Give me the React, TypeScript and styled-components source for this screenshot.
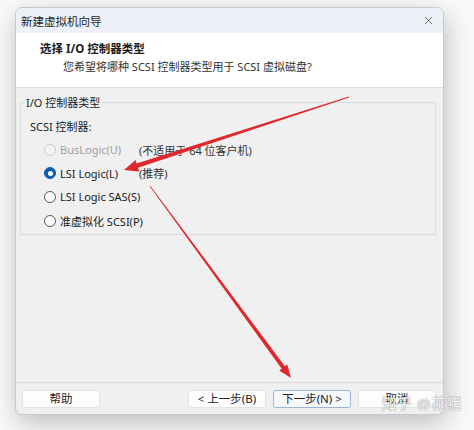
import styled, { createGlobalStyle } from "styled-components";
import { X } from "lucide-react";

const GlobalStyle = createGlobalStyle`
  html, body {
    margin: 0;
    padding: 0;
    background: #f9f9f9;
  }
  body {
    font-family: "Noto Sans", "Noto Sans CJK SC", sans-serif;
    font-size: 11px;
    color: #1b1b1b;
  }
`;

const Page = styled.div`
  position: relative;
  width: 474px;
  height: 430px;
  padding: 7px 0 0 15px;
  box-sizing: border-box;
  overflow: hidden;
`;

const Window = styled.div`
  width: 429px;
  height: 408px;
  box-sizing: border-box;
  display: flex;
  flex-direction: column;
  background: #f0f0f0;
  border: 1px solid #c6c9ce;
  border-radius: 7px;
  box-shadow: 2px 8px 26px rgba(0, 0, 0, 0.24);
  overflow: hidden;
`;

const TitleBar = styled.div`
  height: 25px;
  flex: none;
  display: flex;
  align-items: center;
  justify-content: space-between;
  padding: 0 8px 0 5px;
  background: #edf1f7;
  font-size: 11.5px;
  color: #1e1e1e;
`;

const CloseIcon = styled(X)`
  width: 13px;
  height: 13px;
  stroke-width: 1.3;
  color: #333;
`;

const Header = styled.div`
  height: 55px;
  flex: none;
  box-sizing: border-box;
  padding: 8px 0 0 24px;
  background: #fff;
  border-bottom: 1px solid #dedede;
`;

const Heading = styled.div`
  font-weight: 700;
  line-height: 16px;
  font-size: 11.5px;
`;

const Subtitle = styled.div`
  margin: 2px 0 0 23px;
  line-height: 16px;
  color: #333;
`;

const Body = styled.div`
  flex: 1;
  padding: 7px 7px 0 4px;
`;

const GroupBox = styled.fieldset`
  margin: 0;
  padding: 0 0 2px 9px;
  border: 1px solid #dcdcdc;
  min-width: 0;
`;

const GroupLabel = styled.legend`
  padding: 0 2px;
  margin-left: -6px;
  line-height: 15px;
`;

const FieldLabel = styled.div`
  line-height: 15px;
  margin: 9px 0 4px;
`;

const RadioList = styled.div`
  display: flex;
  flex-direction: column;
  padding-left: 14px;
`;

const RadioRow = styled.div`
  display: grid;
  grid-template-columns: 95px auto;
  align-items: center;
  height: 23.6px;
`;

const RadioLabel = styled.label<{ $disabled?: boolean }>`
  display: flex;
  align-items: center;
  gap: 4px;
  color: ${(p) => (p.$disabled ? "#a0a0a0" : "#1b1b1b")};
  white-space: nowrap;
`;

const RadioDot = styled.span<{ $checked?: boolean; $disabled?: boolean }>`
  position: relative;
  width: 12px;
  height: 12px;
  box-sizing: border-box;
  border-radius: 50%;
  flex: none;
  border: 1px solid
    ${(p) => (p.$checked ? "#0b5fb0" : p.$disabled ? "#cdcdcd" : "#5a5a5a")};
  background: ${(p) => (p.$checked ? "#0b5fb0" : p.$disabled ? "#f3f3f3" : "#fafafa")};

  &::after {
    content: "";
    display: ${(p) => (p.$checked ? "block" : "none")};
    position: absolute;
    left: 50%;
    top: 50%;
    width: 5px;
    height: 5px;
    margin: -2.5px 0 0 -2.5px;
    border-radius: 50%;
    background: #fff;
  }
`;

const Note = styled.span`
  color: #333;
  white-space: nowrap;
`;

const Footer = styled.div`
  flex: none;
  display: flex;
  align-items: center;
  padding: 7px 7px 6px 6px;
  border-top: 1px solid #dadada;
`;

const NavGroup = styled.div`
  margin-left: auto;
  display: flex;
  gap: 7px;
`;

const Button = styled.button<{ $primary?: boolean }>`
  width: 78px;
  height: 18px;
  padding: 0;
  font: inherit;
  font-size: 11.5px;
  line-height: 16px;
  color: #222;
  border-radius: 3px;
  border: 1px solid ${(p) => (p.$primary ? "#9bb6d0" : "#e3e3e3")};
  background: ${(p) => (p.$primary ? "#f6f9fc" : "#fdfdfd")};
`;

const Overlay = styled.svg`
  position: absolute;
  left: 0;
  top: 0;
  pointer-events: none;
`;

const Watermark = styled.div`
  position: absolute;
  right: 12px;
  bottom: 18px;
  font-size: 15px;
  line-height: 18px;
  color: rgba(255, 255, 255, 0.92);
  text-shadow: 0 0 1px #8f8f8f, 0 0 1px #8f8f8f;
  letter-spacing: 0.5px;
`;

function arrowPoints(
  x1: number,
  y1: number,
  x2: number,
  y2: number,
  w0: number,
  w1: number,
  hl: number,
  hw: number
) {
  const len = Math.hypot(x2 - x1, y2 - y1);
  const ux = (x2 - x1) / len;
  const uy = (y2 - y1) / len;
  const nx = -uy;
  const ny = ux;
  const bx = x2 - ux * hl;
  const by = y2 - uy * hl;
  const pts = [
    [x1 + (nx * w0) / 2, y1 + (ny * w0) / 2],
    [bx + (nx * w1) / 2, by + (ny * w1) / 2],
    [bx + (nx * hw) / 2, by + (ny * hw) / 2],
    [x2, y2],
    [bx - (nx * hw) / 2, by - (ny * hw) / 2],
    [bx - (nx * w1) / 2, by - (ny * w1) / 2],
    [x1 - (nx * w0) / 2, y1 - (ny * w0) / 2],
  ];
  return pts.map((p) => p.map((v) => v.toFixed(1)).join(",")).join(" ");
}

const options = [
  { label: "BusLogic(U)", note: "(不适用于 64 位客户机)", disabled: true },
  { label: "LSI Logic(L)", note: "(推荐)", checked: true },
  { label: "LSI Logic SAS(S)" },
  { label: "准虚拟化 SCSI(P)" },
];

export default function App() {
  return (
    <Page>
      <GlobalStyle />
      <Window>
        <TitleBar>
          <span>新建虚拟机向导</span>
          <CloseIcon />
        </TitleBar>
        <Header>
          <Heading>选择 I/O 控制器类型</Heading>
          <Subtitle>您希望将哪种 SCSI 控制器类型用于 SCSI 虚拟磁盘?</Subtitle>
        </Header>
        <Body>
          <GroupBox>
            <GroupLabel>I/O 控制器类型</GroupLabel>
            <FieldLabel>SCSI 控制器:</FieldLabel>
            <RadioList>
              {options.map((o) => (
                <RadioRow key={o.label}>
                  <RadioLabel $disabled={o.disabled}>
                    <RadioDot $checked={o.checked} $disabled={o.disabled} />
                    {o.label}
                  </RadioLabel>
                  {o.note && <Note>{o.note}</Note>}
                </RadioRow>
              ))}
            </RadioList>
          </GroupBox>
        </Body>
        <Footer>
          <Button>帮助</Button>
          <NavGroup>
            <Button>&lt; 上一步(B)</Button>
            <Button $primary>下一步(N) &gt;</Button>
            <Button>取消</Button>
          </NavGroup>
        </Footer>
      </Window>
      <Watermark>知乎 @花猪</Watermark>
      <Overlay width="474" height="430" viewBox="0 0 474 430">
        <polygon points={arrowPoints(349, 97, 124, 170, 0.8, 4.5, 14, 12)} fill="#e0282c" />
        <polygon points={arrowPoints(150, 186, 291, 378, 0.8, 4, 13, 10)} fill="#e0282c" />
      </Overlay>
    </Page>
  );
}
